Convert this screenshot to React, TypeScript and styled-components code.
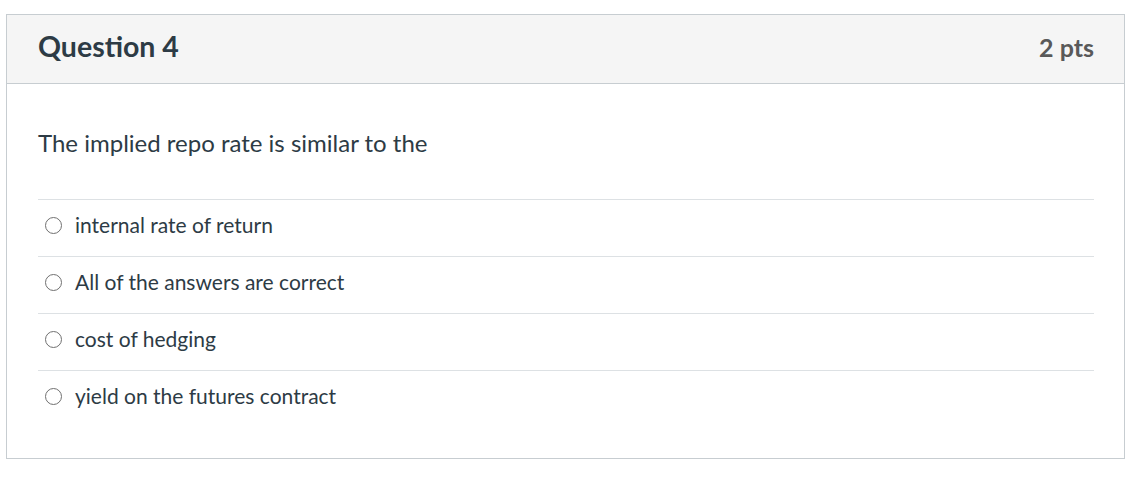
import React from 'react';
import styled, { createGlobalStyle } from 'styled-components';

const GlobalStyle = createGlobalStyle`
  body {
    margin: 0;
    padding: 14px 0 0 6px;
    background: #fff;
    font-family: Lato, "Helvetica Neue", Arial, sans-serif;
  }
`;

const QuestionCard = styled.div`
  width: 1119px;
  box-sizing: border-box;
  border: 1px solid #c7cdd1;
  background: #fff;
`;

const Header = styled.div`
  display: flex;
  align-items: center;
  justify-content: space-between;
  box-sizing: border-box;
  height: 69px;
  padding: 0 30px 6px 31px;
  background: #f5f5f5;
  border-bottom: 1px solid #c7cdd1;
`;

const Title = styled.h2`
  margin: 0;
  font-size: 28.5px;
  font-weight: 700;
  color: #2d3b45;
`;

const Points = styled.span`
  margin-top: 2px;
  font-size: 25px;
  font-weight: 700;
  color: #595959;
`;

const Body = styled.div`
  padding: 41px 30px 31px 31px;
`;

const Prompt = styled.p`
  margin: 0 0 38px;
  font-size: 24px;
  line-height: 36px;
  color: #2d3b45;
`;

const AnswerList = styled.div`
  display: flex;
  flex-direction: column;
`;

const AnswerRow = styled.label`
  display: flex;
  align-items: center;
  gap: 13px;
  box-sizing: border-box;
  height: 57px;
  padding: 0 0 8px 7px;
  border-top: 1px solid #dde1e4;
  font-size: 21px;
  color: #2d3b45;
`;

const Radio = styled.span`
  width: 17px;
  height: 17px;
  margin-top: 3px;
  box-sizing: border-box;
  border: 1px solid #707070;
  border-radius: 50%;
  background: #fff;
  flex: none;
`;

const answers = [
  'internal rate of return',
  'All of the answers are correct',
  'cost of hedging',
  'yield on the futures contract',
];

export default function App() {
  return (
    <>
      <GlobalStyle />
      <QuestionCard>
        <Header>
          <Title>Question 4</Title>
          <Points>2 pts</Points>
        </Header>
        <Body>
          <Prompt>The implied repo rate is similar to the</Prompt>
          <AnswerList>
            {answers.map(a => (
              <AnswerRow key={a}>
                <Radio />
                {a}
              </AnswerRow>
            ))}
          </AnswerList>
        </Body>
      </QuestionCard>
    </>
  );
}
